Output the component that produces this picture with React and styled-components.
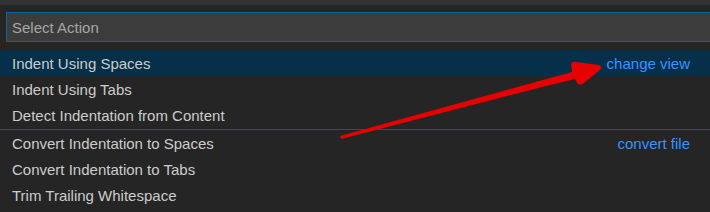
import styled, { createGlobalStyle } from "styled-components";

const GlobalStyle = createGlobalStyle`
  html, body {
    margin: 0;
    padding: 0;
    background: #252526;
    overflow: hidden;
  }
  body {
    font-family: "Liberation Sans", Arial, sans-serif;
  }
`;

const groups = [
  [
    { label: "Indent Using Spaces", hint: "change view", focused: true },
    { label: "Indent Using Tabs" },
    { label: "Detect Indentation from Content" },
  ],
  [
    { label: "Convert Indentation to Spaces", hint: "convert file" },
    { label: "Convert Indentation to Tabs" },
    { label: "Trim Trailing Whitespace" },
  ],
];

const App = () => {
  return (
    <>
      <GlobalStyle />
      <Widget>
        <TopStrip />
        <InputWrap>
          <Input placeholder="Select Action" />
        </InputWrap>
        <List>
          {groups.map((group, gi) =>
            group.map((item, i) => (
              <Row key={item.label} focused={item.focused} separated={gi > 0 && i === 0}>
                <Label>{item.label}</Label>
                {item.hint && <Hint>{item.hint}</Hint>}
              </Row>
            ))
          )}
        </List>
        <Arrow viewBox="0 0 710 212" width="710" height="212">
          <path
            d="M340,136 L550,78 L572,72 L571,64 Q572,61 576,62 L599,65 Q603,67 600,70 L584,83 Q580,86 577,83 L575,79 L550,85 L341,139 Z"
            fill="#e60000"
          />
        </Arrow>
      </Widget>
    </>
  );
};

export default App;

const Widget = styled.div`
  position: relative;
  width: 720px;
  height: 212px;
  background: #252526;
`;

const TopStrip = styled.div`
  height: 5px;
  background: #333333;
`;

const InputWrap = styled.div`
  padding: 7px 6px 8px 6px;
`;

const Input = styled.input`
  display: block;
  box-sizing: border-box;
  width: 100%;
  height: 30px;
  margin: 0;
  padding: 0 5px;
  border: 1px solid #0e639c;
  background: #3c3c3c;
  color: #cccccc;
  font-family: "Liberation Sans", Arial, sans-serif;
  font-size: 15px;
  outline: none;
  &::placeholder {
    color: #a6a6a6;
  }
`;

const List = styled.div`
  display: flex;
  flex-direction: column;
  width: 710px;
`;

const Row = styled.div`
  display: flex;
  align-items: center;
  justify-content: space-between;
  height: 26px;
  padding: 0 20px 0 12px;
  background: ${(p) => (p.focused ? "#062f4a" : "transparent")};
  border-top: ${(p) => (p.separated ? "1px solid #45454d" : "none")};
  margin-top: ${(p) => (p.separated ? "1px" : "0")};
`;

const Label = styled.span`
  color: #cccccc;
  font-size: 15px;
`;

const Hint = styled.span`
  color: #3794ff;
  font-size: 15px;
`;

const Arrow = styled.svg`
  position: absolute;
  left: 0;
  top: 0;
  pointer-events: none;
`;
